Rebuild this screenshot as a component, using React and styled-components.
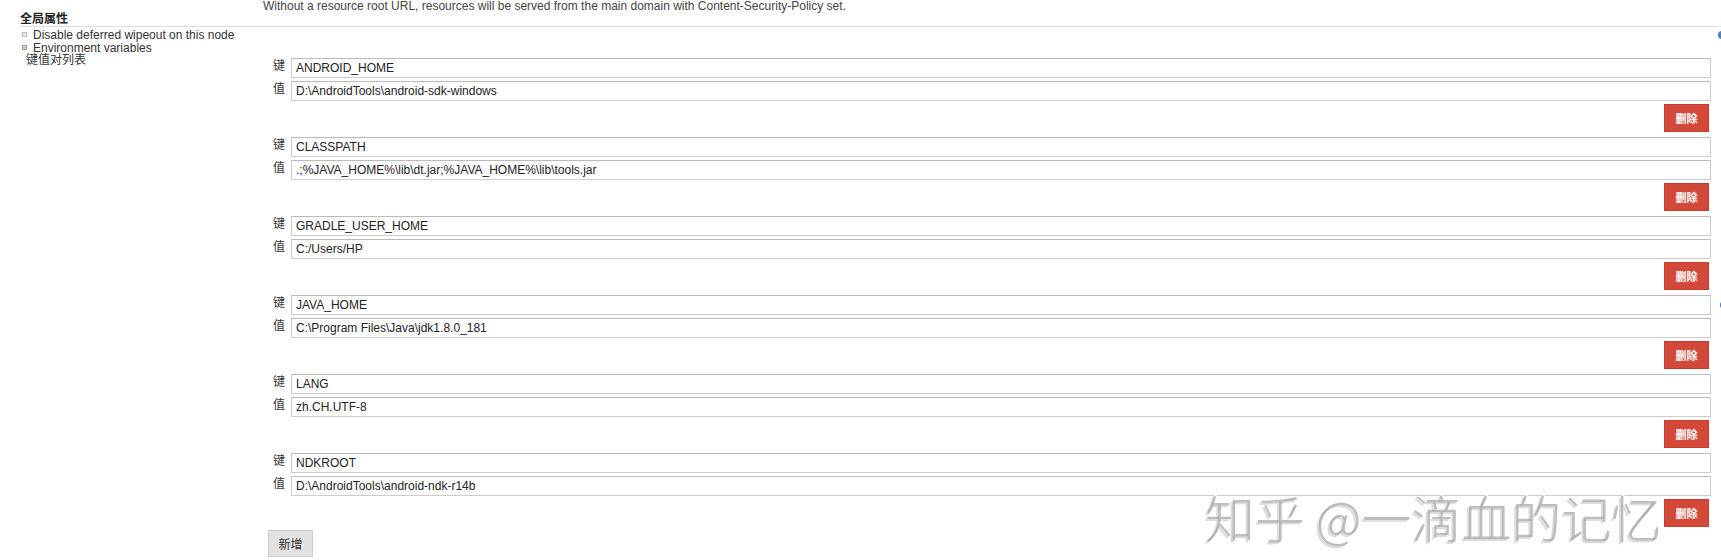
import styled, { createGlobalStyle } from 'styled-components';

const GlobalStyle = createGlobalStyle`
  html, body {
    margin: 0;
    padding: 0;
    background: #fff;
    overflow: hidden;
  }
  body {
    font-family: "Liberation Sans", Arial, "Noto Sans CJK SC", sans-serif;
    font-size: 12px;
    color: #333;
  }
`;

const Page = styled.div`
  position: relative;
  width: 1721px;
  height: 560px;
  overflow: hidden;
`;

const Description = styled.div`
  padding-left: 263px;
  height: 12px;
  line-height: 13px;
  color: #444;
  white-space: nowrap;
`;

const SectionHeader = styled.div`
  margin-left: 20px;
  height: 14px;
  line-height: 15px;
  font-size: 12px;
  font-weight: bold;
  color: #222;
  border-bottom: 1px solid #ddd;
`;

const Options = styled.div`
  padding-top: 1px;
`;

const OptionRow = styled.div`
  display: flex;
  align-items: center;
  height: 13px;
  padding-left: 22px;
  white-space: nowrap;
`;

const Check = styled.span`
  display: inline-flex;
  align-items: center;
  justify-content: center;
  width: 5px;
  height: 5px;
  margin-right: 6px;
  border: 1px solid ${({ checked }) => (checked ? '#999' : '#bbb')};
  background: #e8e8e8;
  box-sizing: border-box;
  svg {
    display: block;
  }
`;

const Help = styled.span`
  margin-left: auto;
  margin-right: -5px;
  width: 8px;
  height: 8px;
  border-radius: 50%;
  background: #4f7fc0;
  flex: none;
`;

const ListRow = styled.div`
  display: grid;
  grid-template-columns: 268px 1fr;
`;

const ListLabel = styled.div`
  padding-left: 26px;
  line-height: 13px;
`;

const ListBody = styled.div`
  padding-top: 4px;
  padding-right: 10px;
`;

const Entry = styled.div`
  display: flex;
  flex-direction: column;
  gap: 3px;
  margin-bottom: ${({ last }) => (last ? '3px' : '5px')};
`;

const Field = styled.div`
  display: grid;
  grid-template-columns: 23px 1fr;
  align-items: start;
  position: relative;
`;

const FieldLabel = styled.span`
  padding-left: 5px;
  line-height: 14px;
  font-family: "Noto Sans CJK SC", sans-serif;
  font-size: 12px;
  color: #333;
`;

const Input = styled.div`
  height: 20px;
  box-sizing: border-box;
  border: 1px solid #ccc;
  border-top-color: #bbb;
  padding: 0 4px;
  line-height: 19px;
  font-size: 12px;
  color: #222;
  white-space: nowrap;
  overflow: hidden;
`;

const FieldHelp = styled(Help)`
  position: absolute;
  right: -12px;
  top: 6px;
`;

const Actions = styled.div`
  display: flex;
  justify-content: flex-end;
  padding-right: 2px;
`;

const DeleteButton = styled.button`
  width: 45px;
  height: 28px;
  border: 1px solid #c3402f;
  background: #d24939;
  color: #fff;
  font-family: "Noto Sans CJK SC", sans-serif;
  font-size: 11px;
  font-weight: bold;
  padding: 0;
  cursor: pointer;
`;

const AddButton = styled.button`
  width: 45px;
  height: 27px;
  border: 1px solid #ccc;
  background: #e2e2e2;
  color: #333;
  font-family: "Noto Sans CJK SC", sans-serif;
  font-size: 12px;
  padding: 0;
  cursor: pointer;
`;

const Watermark = styled.div`
  position: absolute;
  left: 1205px;
  top: 487px;
  font-family: "Noto Sans CJK SC", sans-serif;
  font-size: 50px;
  font-weight: 300;
  line-height: 58px;
  color: rgba(150, 150, 150, 0.62);
  text-shadow: -2px 2px 0 rgba(140, 140, 140, 0.3), 1px -1px 0 rgba(255, 255, 255, 0.9);
  white-space: nowrap;
  pointer-events: none;
`;

const vars = [
  { key: 'ANDROID_HOME', value: 'D:\\AndroidTools\\android-sdk-windows' },
  { key: 'CLASSPATH', value: '.;%JAVA_HOME%\\lib\\dt.jar;%JAVA_HOME%\\lib\\tools.jar' },
  { key: 'GRADLE_USER_HOME', value: 'C:/Users/HP' },
  { key: 'JAVA_HOME', value: 'C:\\Program Files\\Java\\jdk1.8.0_181', help: true },
  { key: 'LANG', value: 'zh.CH.UTF-8' },
  { key: 'NDKROOT', value: 'D:\\AndroidTools\\android-ndk-r14b' },
];

const Tick = () => (
  <svg width="5" height="5" viewBox="0 0 5 5">
    <path d="M0.8 2.6 L2 3.8 L4.3 1" stroke="#555" strokeWidth="1" fill="none" />
  </svg>
);

const App = () => {
  return (
    <Page>
      <GlobalStyle />
      <Description>
        Without a resource root URL, resources will be served from the main domain with Content-Security-Policy set.
      </Description>
      <SectionHeader>全局属性</SectionHeader>
      <Options>
        <OptionRow>
          <Check />
          Disable deferred wipeout on this node
          <Help />
        </OptionRow>
        <OptionRow>
          <Check checked>
            <Tick />
          </Check>
          Environment variables
        </OptionRow>
      </Options>
      <ListRow>
        <ListLabel>键值对列表</ListLabel>
        <ListBody>
          {vars.map((v, i) => (
            <Entry key={v.key} last={i === vars.length - 1}>
              <Field>
                <FieldLabel>键</FieldLabel>
                <Input>{v.key}</Input>
                {v.help && <FieldHelp />}
              </Field>
              <Field>
                <FieldLabel>值</FieldLabel>
                <Input>{v.value}</Input>
              </Field>
              <Actions>
                <DeleteButton>删除</DeleteButton>
              </Actions>
            </Entry>
          ))}
          <AddButton>新增</AddButton>
        </ListBody>
      </ListRow>
      <Watermark>知乎 @一滴血的记忆</Watermark>
    </Page>
  );
};

export default App;
